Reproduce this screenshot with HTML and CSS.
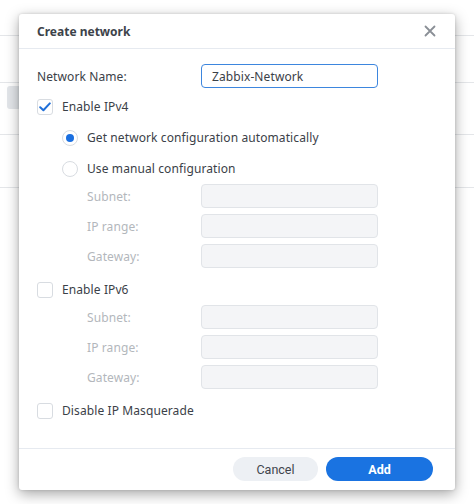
FILE: index.html
```html
<!DOCTYPE html>
<html>
<head>
<meta charset="utf-8">
<link rel="stylesheet" href="styles.css">
</head>
<body>
<div class="bg">
  <div class="bg-row"></div>
  <div class="bg-row"><span class="bg-block"></span></div>
  <div class="bg-row"></div>
  <div class="bg-row"></div>
</div>
<div class="dialog">
  <div class="header">
    <span class="title">Create network</span>
    <svg class="close" width="12" height="12" viewBox="0 0 12 12"><path d="M1.5 1.5L10.5 10.5M10.5 1.5L1.5 10.5" stroke="#8a8f96" stroke-width="1.8" stroke-linecap="round"/></svg>
  </div>
  <div class="body">
    <div class="row">
      <span class="label">Network Name:</span>
      <div class="input active">Zabbix-Network</div>
    </div>
    <div class="check-row">
      <span class="box checked"><svg width="12" height="10" viewBox="0 0 12 10"><path d="M1.2 5.2L4.4 8.2L10.8 1.4" fill="none" stroke="#1f6fd8" stroke-width="2" stroke-linecap="round" stroke-linejoin="round"/></svg></span>
      <span class="text">Enable IPv4</span>
    </div>
    <div class="radio-row">
      <span class="radio on"><span class="dot"></span></span>
      <span class="text">Get network configuration automatically</span>
    </div>
    <div class="radio-row">
      <span class="radio"></span>
      <span class="text">Use manual configuration</span>
    </div>
    <div class="sub-row"><span class="label dim">Subnet:</span><div class="input disabled"></div></div>
    <div class="sub-row"><span class="label dim">IP range:</span><div class="input disabled"></div></div>
    <div class="sub-row"><span class="label dim">Gateway:</span><div class="input disabled"></div></div>
    <div class="check-row">
      <span class="box"></span>
      <span class="text">Enable IPv6</span>
    </div>
    <div class="sub-row"><span class="label dim">Subnet:</span><div class="input disabled"></div></div>
    <div class="sub-row"><span class="label dim">IP range:</span><div class="input disabled"></div></div>
    <div class="sub-row"><span class="label dim">Gateway:</span><div class="input disabled"></div></div>
    <div class="check-row">
      <span class="box"></span>
      <span class="text">Disable IP Masquerade</span>
    </div>
  </div>
  <div class="footer">
    <button class="btn cancel">Cancel</button>
    <button class="btn add">Add</button>
  </div>
</div>
</body>
</html>
```
FILE: styles.css
```css
* { box-sizing: border-box; }
html, body { margin: 0; padding: 0; }
body {
  width: 474px;
  height: 504px;
  background: #ffffff;
  font-family: "Noto Sans", "DejaVu Sans", sans-serif;
  color: #3b4148;
  position: relative;
  overflow: hidden;
}
.bg { padding-top: 35px; }
.bg-row {
  border-top: 1px solid #e4e6e9;
  height: 51px;
  position: relative;
}
.bg-row:nth-child(1) { height: 47px; }
.bg-row:nth-child(2) { height: 52px; }
.bg-row:nth-child(3) { height: 53px; }
.bg-block {
  position: absolute;
  left: 7px;
  top: 3px;
  width: 14px;
  height: 23px;
  background: #e3e6ea;
  border-radius: 3px;
}
.dialog {
  position: absolute;
  left: 19px;
  top: 14px;
  width: 436px;
  height: 476px;
  background: #fff;
  border-radius: 3px;
  box-shadow: 0 4px 14px rgba(0,0,0,0.35), 0 0 3px rgba(0,0,0,0.15);
  display: flex;
  flex-direction: column;
}
.header {
  height: 35px;
  border-bottom: 1px solid #e6eaf0;
  display: flex;
  align-items: center;
  justify-content: space-between;
  padding: 0 19px 0 18px;
}
.title {
  font-size: 12px;
  font-weight: bold;
  color: #3d434a;
}
.body {
  flex: 1;
  padding: 15px 0 0 18px;
  display: flex;
  flex-direction: column;
  letter-spacing: 0.1px;
}
.row, .sub-row {
  display: flex;
  align-items: center;
  height: 24px;
}
.row { margin-bottom: 3px; }
.sub-row { margin-bottom: 6px; }
.label {
  width: 164px;
  font-size: 12px;
}
.sub-row .label { padding-left: 50px; width: 164px; }
.dim { color: #b3b7bc; }
.input {
  width: 177px;
  height: 24px;
  border-radius: 4px;
  font-size: 12px;
  padding: 0 10px;
  display: flex;
  align-items: center;
}
.input.active {
  border: 1px solid #3d86de;
  color: #3b4148;
}
.input.disabled {
  background: #f4f5f7;
  border: 1px solid #e1e4e8;
}
.check-row, .radio-row {
  display: flex;
  align-items: center;
  height: 31px;
  font-size: 12px;
}
.radio-row { padding-left: 25px; }
.box {
  width: 16px;
  height: 16px;
  border: 1px solid #d8dce1;
  border-radius: 3px;
  margin-right: 9px;
  display: flex;
  align-items: center;
  justify-content: center;
  background: #fff;
}
.radio {
  width: 16px;
  height: 16px;
  border: 1px solid #d8dce1;
  border-radius: 50%;
  margin-right: 9px;
  display: flex;
  align-items: center;
  justify-content: center;
}
.radio .dot {
  width: 8px;
  height: 8px;
  border-radius: 50%;
  background: #1a6fe0;
}
.footer {
  height: 42px;
  border-top: 1px solid #e6eaf0;
  display: flex;
  justify-content: flex-end;
  align-items: flex-start;
  padding: 8px 22px 0 0;
  gap: 8px;
}
.btn {
  height: 24px;
  border: none;
  border-radius: 12px;
  font-family: "Roboto", "Liberation Sans", sans-serif;
  font-size: 12.5px;
  cursor: pointer;
}
.cancel {
  width: 85px;
  background: #edf0f4;
  color: #3f454c;
}
.add {
  width: 107px;
  background: #1a73e1;
  color: #fff;
  font-weight: bold;
}
```
